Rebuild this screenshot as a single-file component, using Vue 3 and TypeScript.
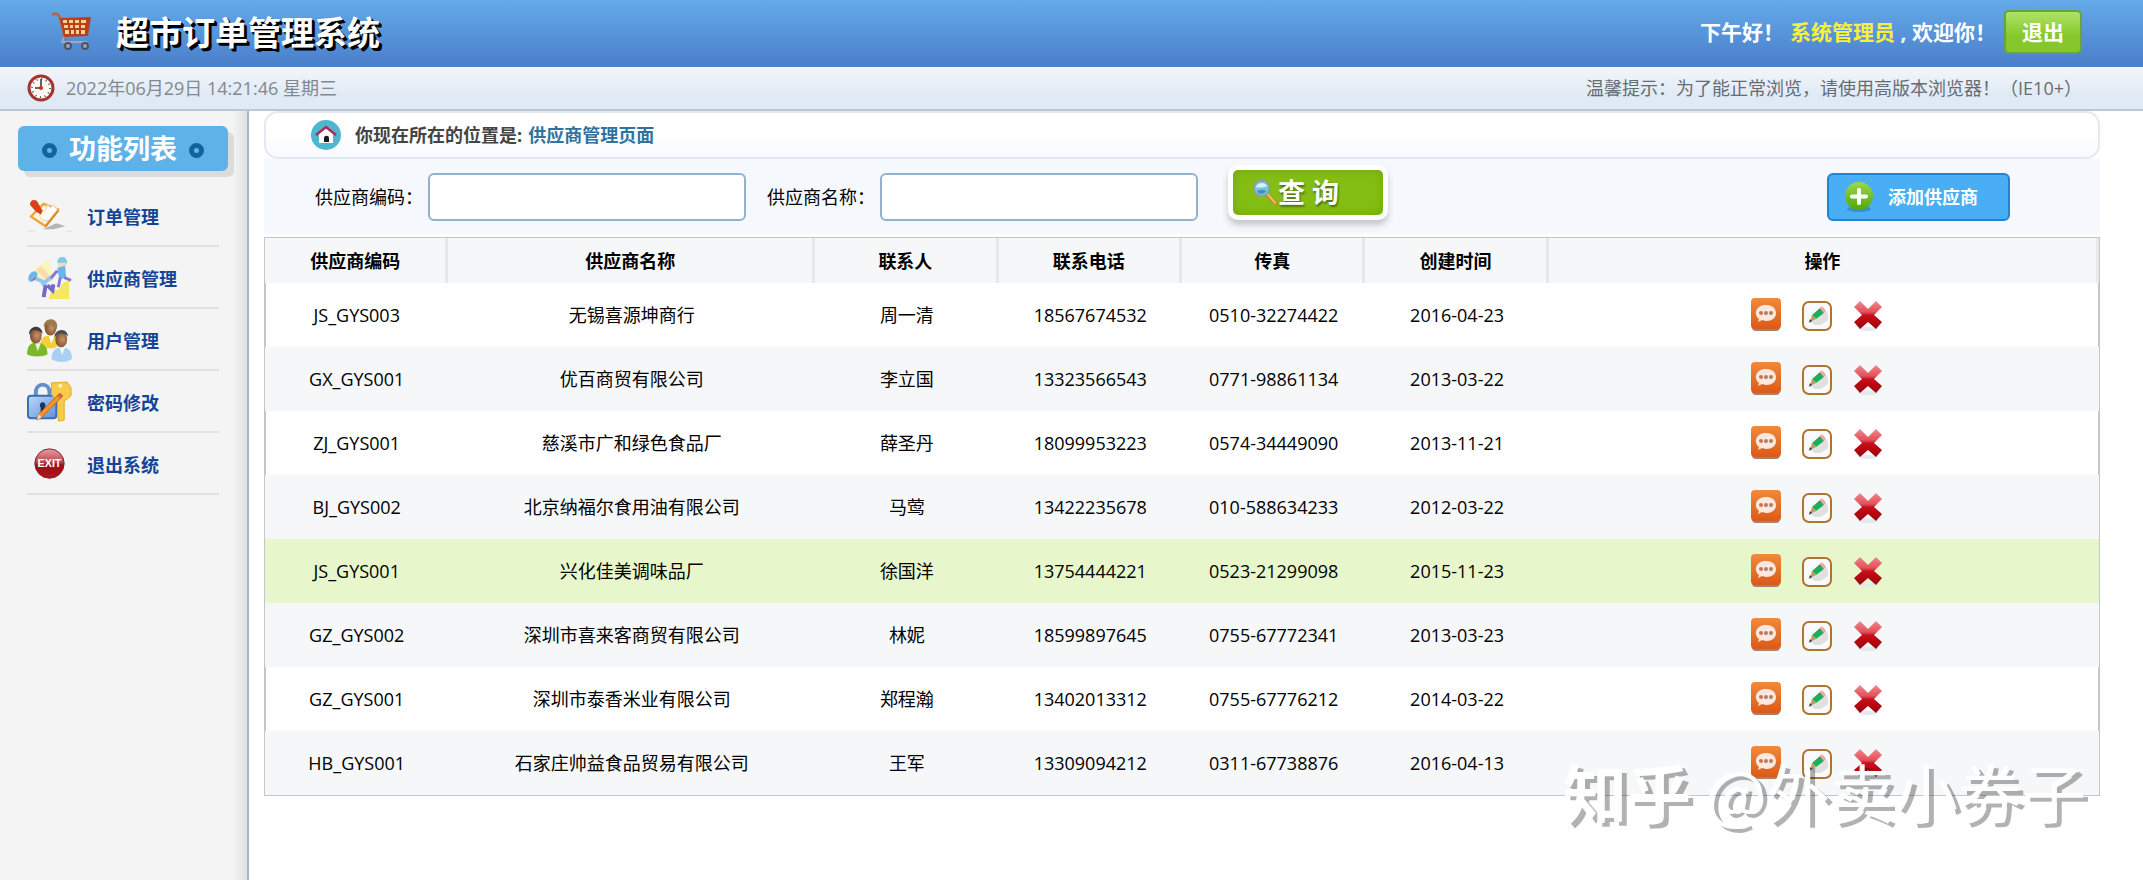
<script setup lang="ts">
import { ref } from 'vue'

interface Provider {
  code: string
  name: string
  contact: string
  phone: string
  fax: string
  created: string
}

const columns = ['供应商编码', '供应商名称', '联系人', '联系电话', '传真', '创建时间', '操作']

const providers: Provider[] = [
  { code: 'JS_GYS003', name: '无锡喜源坤商行', contact: '周一清', phone: '18567674532', fax: '0510-32274422', created: '2016-04-23' },
  { code: 'GX_GYS001', name: '优百商贸有限公司', contact: '李立国', phone: '13323566543', fax: '0771-98861134', created: '2013-03-22' },
  { code: 'ZJ_GYS001', name: '慈溪市广和绿色食品厂', contact: '薛圣丹', phone: '18099953223', fax: '0574-34449090', created: '2013-11-21' },
  { code: 'BJ_GYS002', name: '北京纳福尔食用油有限公司', contact: '马莺', phone: '13422235678', fax: '010-588634233', created: '2012-03-22' },
  { code: 'JS_GYS001', name: '兴化佳美调味品厂', contact: '徐国洋', phone: '13754444221', fax: '0523-21299098', created: '2015-11-23' },
  { code: 'GZ_GYS002', name: '深圳市喜来客商贸有限公司', contact: '林妮', phone: '18599897645', fax: '0755-67772341', created: '2013-03-23' },
  { code: 'GZ_GYS001', name: '深圳市泰香米业有限公司', contact: '郑程瀚', phone: '13402013312', fax: '0755-67776212', created: '2014-03-22' },
  { code: 'HB_GYS001', name: '石家庄帅益食品贸易有限公司', contact: '王军', phone: '13309094212', fax: '0311-67738876', created: '2016-04-13' },
]

const menu = [
  { id: 'order', label: '订单管理' },
  { id: 'provider', label: '供应商管理' },
  { id: 'user', label: '用户管理' },
  { id: 'password', label: '密码修改' },
  { id: 'exit', label: '退出系统' },
]

const active = ref('JS_GYS001')
const queryCode = ref('')
const queryName = ref('')
</script>

<template>
  <div class="page">
    <svg class="defs" width="0" height="0" aria-hidden="true">
      <defs>
        <linearGradient id="gOrange" x1="0" y1="0" x2="0" y2="1">
          <stop offset="0" stop-color="#f08a3c" /><stop offset="1" stop-color="#dc5a18" />
        </linearGradient>
        <linearGradient id="gRed" x1="0" y1="0" x2="0" y2="1">
          <stop offset="0" stop-color="#f4868c" /><stop offset=".4" stop-color="#e0505a" /><stop offset=".5" stop-color="#c8101c" /><stop offset="1" stop-color="#9c0008" />
        </linearGradient>
        <linearGradient id="gExit" x1="0" y1="0" x2="0" y2="1">
          <stop offset="0" stop-color="#e2a3a6" /><stop offset=".45" stop-color="#b9474d" /><stop offset=".55" stop-color="#9d0c14" /><stop offset="1" stop-color="#b01820" />
        </linearGradient>
        <linearGradient id="gLock" x1="0" y1="0" x2="1" y2="1">
          <stop offset="0" stop-color="#bcd8f8" /><stop offset="1" stop-color="#5d92d8" />
        </linearGradient>
        <linearGradient id="gGreen" x1="0" y1="0" x2="0" y2="1">
          <stop offset="0" stop-color="#9ad84a" /><stop offset="1" stop-color="#4fa80c" />
        </linearGradient>
        <radialGradient id="gFace" cx=".6" cy=".5" r=".6">
          <stop offset="0" stop-color="#c89468" /><stop offset="1" stop-color="#7a4a2c" />
        </radialGradient>
      </defs>
    </svg>

    <header class="topbar">
      <div class="brand">
        <svg class="cart" viewBox="0 0 40 40" aria-hidden="true">
          <path d="M1 2.500c4-2 6 0 7 4l5 20" fill="none" stroke="#b8623c" stroke-width="2.500" stroke-linecap="round" />
          <path d="M8 6l31-1-3 19-24 1z" fill="#b8401c" />
          <g fill="#ffd090">
            <path d="M11 8h4v3h-4zM17 8h4v3h-4zM23 8h4v3h-4zM29 8h5v3h-5z" />
            <path d="M12 13h4v3h-4zM18 13h3v3h-3zM23 13h4v3h-4zM29 13h4v3h-4z" />
            <path d="M13 18h4v4h-4zM19 18h3v4h-3zM24 18h3v4h-3zM29 18h4v4h-4z" />
          </g>
          <path d="M12 25l-2 5h25" fill="none" stroke="#a0a8b8" stroke-width="2" />
          <circle cx="16" cy="34" r="3" fill="#9ca4b0" stroke="#4c5464" stroke-width="2" />
          <circle cx="33" cy="34" r="3" fill="#9ca4b0" stroke="#4c5464" stroke-width="2" />
        </svg>
        <h1>超市订单管理系统</h1>
      </div>
      <div class="greeting">
        <p>下午好！<span class="user">系统管理员</span> , 欢迎你！</p>
        <button type="button" class="logout">退出</button>
      </div>
    </header>

    <div class="infobar">
      <div class="clock">
        <svg viewBox="0 0 28 28" aria-hidden="true">
          <circle cx="14" cy="14" r="12" fill="#fbf8f4" stroke="#a83230" stroke-width="3" />
          <circle cx="14" cy="14" r="9" fill="none" stroke="#555" stroke-width="2" stroke-dasharray="1 3.710" />
          <path d="M14 5v9H8" fill="none" stroke="#333" stroke-width="1.500" />
          <circle cx="14" cy="14" r="2" fill="#d23028" />
        </svg>
        <time datetime="2022-06-29T14:21:46">2022年06月29日 14:21:46 星期三</time>
      </div>
      <p class="tip">温馨提示：为了能正常浏览，请使用高版本浏览器！（IE10+）</p>
    </div>

    <div class="body">
      <nav class="sidebar" aria-label="功能列表">
        <h2><i class="dot"></i>功能列表<i class="dot"></i></h2>
        <ul>
          <li v-for="item in menu" :key="item.id">
            <a href="#">
              <svg viewBox="0 0 46 46" aria-hidden="true">
                <template v-if="item.id === 'order'">
                  <path d="M16 36l14-6 9 3-12 3z" fill="#b4b4b4" />
                  <path d="M4 23L17 10l15 6-13 17z" fill="#fff8e0" stroke="#eaa63c" stroke-width="2.500" stroke-linejoin="round" />
                  <path d="M19 33l13-16" stroke="#d48c2c" stroke-width="2" />
                  <path d="M13 21l7-6 1-5 3 4 3-3 4 5-9 11c-5 1-9-1-9-6z" fill="#fffdf6" stroke="#e4cc98" />
                  <path d="M3 11c0-5 4-6 7-4l6 10-2 4-5-3z" fill="#d8401c" />
                  <path d="M0 38h8M40 38h6" stroke="#e0e0e0" />
                </template>
                <template v-else-if="item.id === 'provider'">
                  <path d="M7 14L22 4l4 14-12 10z" fill="#fbf6b8" />
                  <path d="M9 14l14 13 4-3L14 10z" fill="#fadcae" />
                  <path d="M22 44l3-10 7 1 5-8 6-2v19z" fill="#f5e860" />
                  <circle cx="36" cy="6" r="5" fill="#7cccec" />
                  <path d="M31 7h9v3l-7 2z" fill="#f8d8b8" />
                  <path d="M31 12l8-2 1 12-7 2z" fill="#6cb4ec" />
                  <path d="M34 22l-2 10M38 22l7 3M31 15l-7 8" fill="none" stroke="#8478d0" stroke-width="3" />
                  <ellipse cx="6" cy="21" rx="4" ry="6" transform="rotate(35 6 21)" fill="#6cb8ec" />
                  <path d="M4 25l5-4 1 3z" fill="#e0685c" />
                  <path d="M9 23l9 4 6-5M15 27l6 5" fill="none" stroke="#94c4f4" stroke-width="4" />
                  <path d="M19 30l-2 12M21 30l5 5 1-6" fill="none" stroke="#7468c8" stroke-width="4" />
                </template>
                <template v-else-if="item.id === 'user'">
                  <path d="M14 27c0-7 4-9 10-9s10 4 10 9l-6 4H17z" fill="#f3cf38" />
                  <path d="M22 18l3 8 3-8z" fill="#fff" />
                  <ellipse cx="24" cy="10" rx="6" ry="8" fill="url(#gFace)" />
                  <path d="M17 9c0-9 13-11 14-1l-1 4c-3-5-7-6-10-5z" fill="#9c7c4c" />
                  <path d="M0 37c0-9 4-12 10-12s11 4 11 12c-5 3-16 3-21 0z" fill="#7cb828" />
                  <path d="M8 25l3 9 3-8z" fill="#e8f4d8" />
                  <ellipse cx="9" cy="18" rx="6" ry="8" fill="url(#gFace)" />
                  <path d="M2 17c0-10 13-11 14-1-3-3-7-4-11-3z" fill="#3c3c40" />
                  <path d="M25 42c0-9 5-12 11-12s10 4 10 12c-5 4-16 4-21 0z" fill="#a8d0f4" />
                  <path d="M33 30l3 8 3-8z" fill="#f0f8ff" />
                  <ellipse cx="35" cy="22" rx="6" ry="8" fill="url(#gFace)" />
                  <path d="M28 20c0-9 13-11 14-1-3-3-7-4-11-2z" fill="#4c4c54" />
                </template>
                <template v-else-if="item.id === 'password'">
                  <path d="M9 18v-5c0-11 14-11 14 0v5" fill="none" stroke="#6090cc" stroke-width="4" />
                  <rect x="1" y="16" width="29" height="23" rx="3" fill="url(#gLock)" stroke="#3c6cb4" stroke-width="2" />
                  <path d="M15 23a3 3 0 0 1 3 5v5h-4v-5a3 3 0 0 1 1-5z" fill="#1c3460" />
                  <path d="M25 3l16-1 4 6v8l-7 6v19l-6 1-1-21-6-6z" fill="#f8cc48" stroke="#e0a828" />
                  <circle cx="34" cy="6" r="2" fill="#fff4c8" />
                  <path d="M33 14l3 3-21 21-5 3 2-6z" fill="#f09430" stroke="#c06820" />
                  <path d="M12 35l3 3-5 3z" fill="#e8dcc8" />
                  <path d="M31 16l3-3 3 3-3 3z" fill="#d06848" />
                </template>
                <template v-else>
                  <circle cx="23" cy="22" r="15" fill="url(#gExit)" stroke="#8c1c22" />
                  <text x="23" y="26" class="exit-text">EXIT</text>
                </template>
              </svg>
              {{ item.label }}
            </a>
          </li>
        </ul>
      </nav>

      <main class="content">
        <div class="location">
          <svg viewBox="0 0 30 30" aria-hidden="true">
            <circle cx="15" cy="15" r="15" fill="#4fb6d0" />
            <path d="M8 14l7-6 7 6v9H8z" fill="#fff" />
            <path d="M5 15l10-8 10 8" fill="none" stroke="#b02c50" stroke-width="2.500" />
            <path d="M13 22v-4c0-3 5-3 5 0v4z" fill="#1c1c1c" />
          </svg>
          <strong>你现在所在的位置是:</strong>
          <a href="#">供应商管理页面</a>
        </div>

        <form class="search" @submit.prevent>
          <label for="queryCode">供应商编码：</label>
          <input id="queryCode" v-model="queryCode" type="text" />
          <label for="queryName" class="second">供应商名称：</label>
          <input id="queryName" v-model="queryName" type="text" />
          <button type="submit" class="query">
            <svg viewBox="0 0 28 28" aria-hidden="true">
              <path d="M17 16l9 9" stroke="#c88830" stroke-width="4" stroke-linecap="round" />
              <path d="M17 15l8 9" stroke="#f4c070" stroke-width="2" stroke-linecap="round" />
              <circle cx="11" cy="9" r="8" fill="#7cc4e4" stroke="#8c9ca8" stroke-width="2" />
              <path d="M5 8c2-5 9-6 12-1-4 1-8 2-12 1z" fill="#d8f0fa" />
              <path d="M6 12c3-2 7-2 10 0-3 4-8 4-10 0z" fill="#3c98b8" />
            </svg>
            <span>查 询</span>
          </button>
          <a href="#" class="add">
            <svg viewBox="0 0 30 30" aria-hidden="true">
              <ellipse cx="15" cy="27" rx="12" ry="3" fill="#3890c8" />
              <circle cx="15" cy="14" r="14" fill="url(#gGreen)" />
              <path d="M15 8v13M8 14.500h14" stroke="#fff" stroke-width="4" stroke-linecap="round" />
            </svg>
            <span>添加供应商</span>
          </a>
        </form>

        <table>
          <thead>
            <tr>
              <th v-for="(col, i) in columns" :key="col" scope="col" :class="'c' + i">{{ col }}</th>
            </tr>
          </thead>
          <tbody>
            <tr v-for="p in providers" :key="p.code" :class="{ active: p.code === active }">
              <td>{{ p.code }}</td>
              <td>{{ p.name }}</td>
              <td>{{ p.contact }}</td>
              <td>{{ p.phone }}</td>
              <td>{{ p.fax }}</td>
              <td>{{ p.created }}</td>
              <td>
                <div class="actions">
                  <a href="#" aria-label="查看">
                    <svg viewBox="0 0 30 34">
                      <rect x="1" y="3" width="28" height="30" rx="4" fill="#9c8478" />
                      <rect width="30" height="31" rx="4" fill="url(#gOrange)" />
                      <path d="M15 7c6 0 10 3 10 8s-4 8-10 8l-4-1-4 2 1-3c-6-5-3-14 7-14z" fill="#fbe8e0" />
                      <g fill="#c07858"><circle cx="10" cy="15" r="2" /><circle cx="15" cy="15" r="2" /><circle cx="20" cy="15" r="2" /></g>
                    </svg>
                  </a>
                  <a href="#" aria-label="修改">
                    <svg viewBox="0 0 30 34">
                      <rect x="1" y="4" width="28" height="28" rx="6" fill="#fafafa" stroke="#ad7434" stroke-width="2" />
                      <path d="M9 24l13-14 4 6v6l-7 5h-7z" fill="#e0e0e0" />
                      <path d="M10 17l8-7 4 5-8 6z" fill="#1cae5c" />
                      <path d="M18 10l2-2 4 5-2 2z" fill="#f0a8a8" />
                      <path d="M10 17l4 4-6 3z" fill="#c89858" />
                      <path d="M8 21l2 2-3 2z" fill="#333" />
                    </svg>
                  </a>
                  <a href="#" aria-label="删除">
                    <svg viewBox="0 0 30 34">
                      <ellipse cx="15" cy="31" rx="9" ry="2" fill="#e4e8ea" />
                      <path d="M7 3l8 8 8-8 6 6-8 8 8 7-6 7-8-7-8 7-6-7 8-7-8-8z" fill="url(#gRed)" />
                    </svg>
                  </a>
                </div>
              </td>
            </tr>
          </tbody>
        </table>
      </main>
    </div>

    <div class="watermark"><b>知乎</b> @外卖小券子</div>
  </div>
</template>

<style>
body {
  margin: 0;
}
</style>

<style scoped>
.page {
  position: relative;
  display: flex;
  flex-direction: column;
  min-height: 100vh;
  overflow: hidden;
  background: #fff;
  color: #000;
  font-family: 'Open Sans', 'Noto Sans CJK SC', sans-serif;
  font-size: 18px;
  line-height: 24px;
}
.page * {
  box-sizing: border-box;
}
.defs {
  position: absolute;
}
h1,
h2,
p,
ul {
  margin: 0;
  padding: 0;
}
a {
  text-decoration: none;
}
svg {
  display: block;
  flex: none;
}
button,
input {
  font: inherit;
}

.topbar {
  display: flex;
  justify-content: space-between;
  align-items: center;
  height: 67px;
  padding: 0 61px 4px 52px;
  background: linear-gradient(#64aae9, #4a7eca);
  color: #fff;
}
.brand {
  display: flex;
  align-items: center;
  gap: 24px;
}
.cart {
  width: 40px;
  height: 40px;
}
h1 {
  padding-top: 2px;
  font-size: 33px;
  line-height: 44px;
  text-shadow: 2px 2px 0 #000, 3px 3px 0 #000;
}
.greeting {
  display: flex;
  align-items: center;
  gap: 8px;
  font-size: 21px;
  font-weight: 700;
}
.greeting .user {
  margin-left: 6px;
  color: #f7f03c;
}
.logout {
  width: 78px;
  height: 44px;
  padding: 0;
  border: 2px solid #68a43c;
  border-radius: 5px;
  background: linear-gradient(#aee267, #86c82c 60%);
  color: #fff;
  cursor: pointer;
}

.infobar {
  display: flex;
  justify-content: space-between;
  align-items: center;
  height: 44px;
  padding: 0 61px 0 27px;
  border-bottom: 2px solid #bac8d6;
  background: linear-gradient(#f4f5fc, #dfeaf4 70%);
  color: #82888f;
}
.clock {
  display: flex;
  align-items: center;
  gap: 11px;
}
.clock svg {
  width: 28px;
  height: 28px;
}
.tip {
  color: #666c74;
}

.body {
  display: flex;
  flex: 1;
}
.sidebar {
  flex: none;
  width: 249px;
  padding: 15px 19px 15px 18px;
  border-right: 2px solid #a9b7c1;
  background: linear-gradient(to right, #f4f4f4 0, #f4f4f4 232px, #dfe3e5 247px);
}
h2 {
  display: flex;
  justify-content: center;
  align-items: center;
  gap: 12px;
  height: 45px;
  border-radius: 6px;
  background: #5fb2e8;
  box-shadow: 6px 6px 0 #dcdcdc;
  color: #fff;
  font-size: 27px;
  line-height: 40px;
}
.dot {
  width: 15px;
  height: 15px;
  margin-top: 4px;
  border: 5px solid #0f65a0;
  border-radius: 50%;
  background: #6cb4dc;
}
.sidebar ul {
  padding: 14px 9px 0;
  list-style: none;
}
.sidebar li a {
  display: flex;
  align-items: center;
  gap: 15px;
  height: 62px;
  padding-top: 3px;
  border-bottom: 2px solid #e0e2e4;
  color: #134496;
  font-weight: 700;
}
.sidebar li svg {
  width: 45px;
  height: 45px;
}
.exit-text {
  fill: #fff;
  font: 700 11px 'Liberation Sans', sans-serif;
  text-anchor: middle;
}

.content {
  flex: 1;
  min-width: 0;
  padding: 0 43px 0 15px;
}
.location {
  display: flex;
  align-items: center;
  height: 48px;
  padding-left: 45px;
  border: 2px solid #e4e8f2;
  border-radius: 14px;
  background: linear-gradient(#fff 40%, #f8faff);
}
.location svg {
  width: 30px;
  height: 30px;
  margin-right: 14px;
}
.location strong {
  margin-right: 6px;
  color: #444;
}
.location a {
  color: #2f72a0;
  font-weight: 700;
}

.search {
  display: flex;
  align-items: center;
  height: 75px;
  padding: 0 90px 0 51px;
  background: #f5f9fd;
}
.search label {
  width: 113px;
  white-space: nowrap;
}
.search .second {
  margin-left: 21px;
}
.search input {
  width: 318px;
  height: 48px;
  padding: 0 8px;
  border: 2px solid #93b1ca;
  border-radius: 6px;
  background: #fff;
}
.query {
  display: flex;
  align-items: center;
  width: 160px;
  height: 55px;
  margin: 0 0 8px 30px;
  padding: 0 0 0 18px;
  border: 5px solid #fff;
  border-radius: 10px;
  background: #84be14;
  box-shadow: 0 5px 6px #c4c8cc, inset 0 0 12px #6fa80c;
  color: #fff;
  font-size: 27px;
  font-weight: 700;
  text-shadow: 1px 2px 2px #4c7010;
  cursor: pointer;
}
.query svg {
  width: 27px;
  height: 28px;
}
.add {
  display: flex;
  align-items: center;
  gap: 14px;
  width: 183px;
  height: 48px;
  margin-left: auto;
  padding-left: 15px;
  border: 2px solid #2084d2;
  border-radius: 6px;
  background: #49aef4;
  color: #fff;
  font-weight: 700;
}
.add svg {
  width: 30px;
  height: 30px;
}

table {
  width: 100%;
  margin-top: 3px;
  border: 1px solid #c4c7ca;
  border-collapse: separate;
  border-spacing: 0;
  table-layout: fixed;
  text-align: center;
}
th,
td {
  padding: 0;
}
th {
  width: 10%;
  height: 45px;
  border-right: 3px solid #e6e9eb;
  background: #f5f7f9;
}
th.c1 {
  width: 20%;
}
th.c6 {
  width: 30%;
}
td {
  height: 64px;
}
tbody tr:nth-child(odd):not(.active) td:first-child {
  box-shadow: inset 1px 0 #c4c7ca;
}
tbody tr:nth-child(odd):not(.active) td:last-child {
  box-shadow: inset -1px 0 #c4c7ca;
}
tbody tr:nth-child(even) {
  background: #f5f7f9;
}
tbody tr.active {
  background: #e8f7cb;
}
.actions {
  display: flex;
  justify-content: center;
  gap: 21px;
  padding-right: 13px;
}
.actions svg {
  width: 30px;
  height: 34px;
}

.watermark {
  position: absolute;
  right: 57px;
  bottom: 50px;
  color: #fff;
  font-family: 'Noto Sans CJK SC', sans-serif;
  font-size: 64px;
  line-height: 80px;
  white-space: nowrap;
  text-shadow: 5px 4px 0 rgba(0, 0, 0, 0.3);
  pointer-events: none;
}
.watermark b {
  font-weight: 700;
}
</style>
